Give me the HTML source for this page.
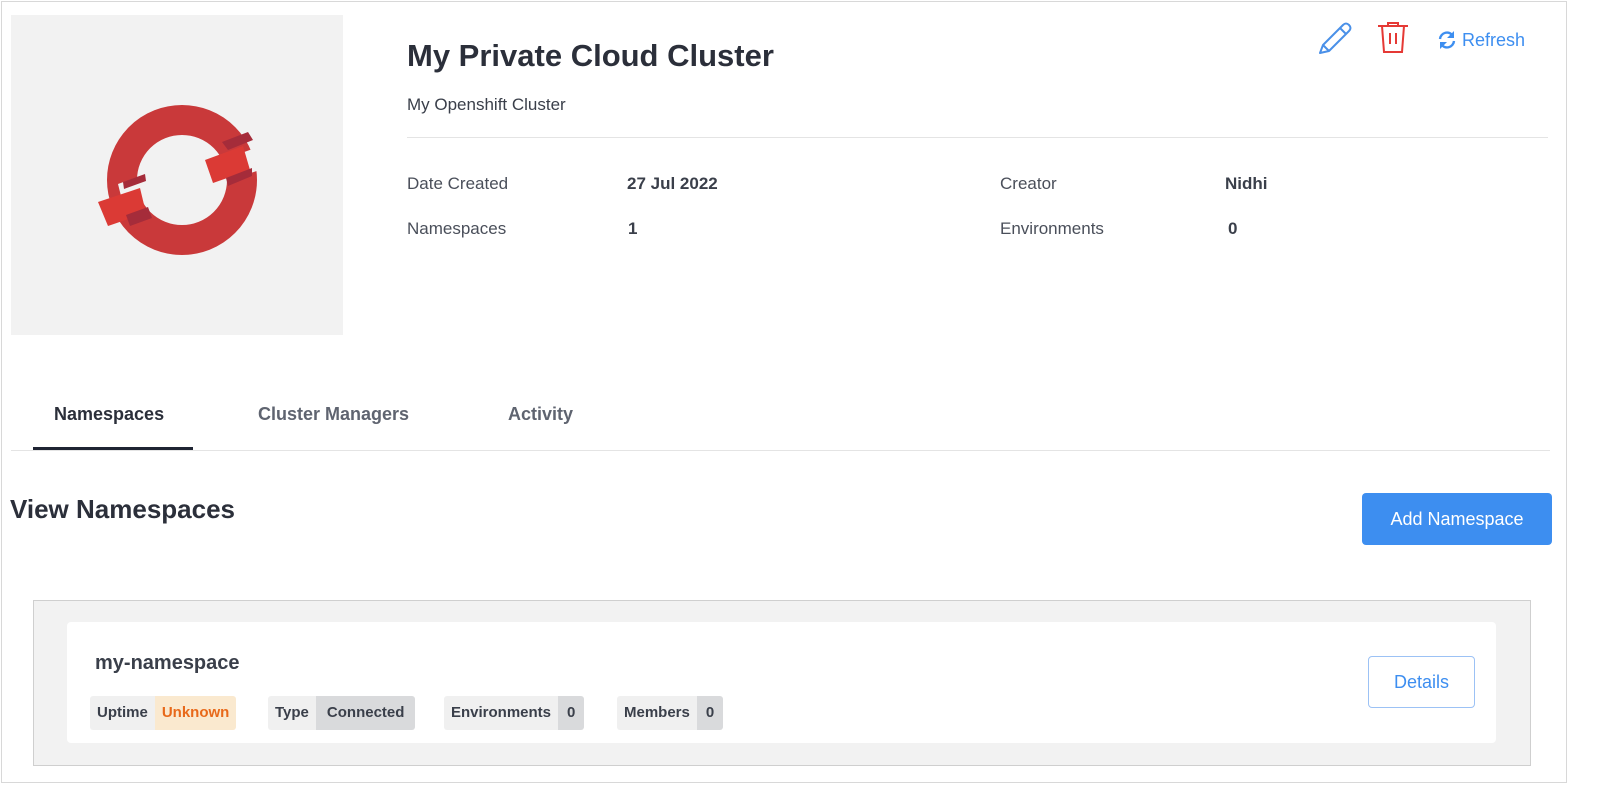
<!DOCTYPE html>
<html><head><style>
*{box-sizing:border-box;margin:0;padding:0}
body{width:1600px;height:799px;background:#fff;font-family:"Liberation Sans",sans-serif;color:#2b2f3a;position:relative;overflow:hidden}
.a{position:absolute}
.frame{left:1px;top:1px;width:1566px;height:782px;border:1px solid #d8d8d8}
.lbl{font-size:17px;color:#4a4f5a}
.val{font-size:17px;font-weight:bold;color:#3a3f4a}
.tab{font-size:18px;font-weight:bold;color:#5f6470}
.badge{top:696px;height:34px;display:flex;font-size:15px;font-weight:bold;border-radius:3px;overflow:hidden}
.badge span{padding:0 7px;line-height:34px}
.k{background:#f0f0f0;color:#3a3f4a}
</style></head><body>
<div class="a frame"></div>
<div class="a" style="left:11px;top:15px;width:332px;height:320px;background:#f2f2f2"></div>
<svg class="a" style="left:90px;top:100px" width="175" height="160" viewBox="90 100 175 160">
<circle cx="182" cy="180" r="60" fill="none" stroke="#c9393a" stroke-width="30"/>
<polygon points="118,184 160,169 163,186 122,200" fill="#f2f2f2"/>
<polygon points="222,160 258,147 260,170 228,180" fill="#f2f2f2"/>
<polygon points="98,202 140,188 146,213 108,226" fill="#db3a35"/>
<polygon points="205,160 243,146 250,170 213,183" fill="#db3a35"/>
<polygon points="126,215 148,207 152,218 130,226" fill="#a52c3a"/>
<polygon points="226,178 252,168 252,176 228,186" fill="#a52c3a"/>
<polygon points="123,182 145,174 146,181 124,189" fill="#a52c3a"/>
<polygon points="222,142 248,132 253,140 228,150" fill="#a52c3a"/>
</svg>
<div class="a" style="left:407px;top:38px;font-size:31px;font-weight:bold;color:#2b2f3a">My Private Cloud Cluster</div>
<div class="a" style="left:407px;top:95px;font-size:17px;color:#3a3f4a">My Openshift Cluster</div>
<div class="a" style="left:407px;top:137px;width:1141px;height:1px;background:#e4e4e4"></div>
<div class="a lbl" style="left:407px;top:174px">Date Created</div>
<div class="a val" style="left:627px;top:174px">27 Jul 2022</div>
<div class="a lbl" style="left:407px;top:219px">Namespaces</div>
<div class="a val" style="left:628px;top:219px">1</div>
<div class="a lbl" style="left:1000px;top:174px">Creator</div>
<div class="a val" style="left:1225px;top:174px">Nidhi</div>
<div class="a lbl" style="left:1000px;top:219px">Environments</div>
<div class="a val" style="left:1228px;top:219px">0</div>
<svg class="a" style="left:1316px;top:20px" width="38" height="36" viewBox="0 0 38 36"><path d="M4 33 L7 25 L27 5 Q30 2 33 5 Q36 8 33 11 L13 31 Z M7 25 L13 31 M24 8 L30 14" fill="none" stroke="#4a90e8" stroke-width="2" stroke-linejoin="round"/></svg>
<svg class="a" style="left:1375px;top:20px" width="36" height="36" viewBox="0 0 36 36"><path d="M3 6 H33 M13 6 V3 H23 V6 M7 6 L9 32 H27 L29 6 M15 13 V24 M21 13 V24" fill="none" stroke="#e53935" stroke-width="2"/></svg>
<svg class="a" style="left:1437px;top:30px" width="20" height="20" viewBox="0 0 20 20"><path d="M3 9 A7 7 0 0 1 16 6 M17 11 A7 7 0 0 1 4 14" fill="none" stroke="#3d8ef0" stroke-width="2.4"/><path d="M17 1 V8 H10 Z M3 19 V12 H10 Z" fill="#3d8ef0"/></svg>
<div class="a" style="left:1462px;top:30px;font-size:18px;color:#3d8ef0">Refresh</div>
<div class="a tab" style="left:54px;top:404px;color:#2b2f3a">Namespaces</div>
<div class="a tab" style="left:258px;top:404px">Cluster Managers</div>
<div class="a tab" style="left:508px;top:404px">Activity</div>
<div class="a" style="left:11px;top:450px;width:1539px;height:1px;background:#e4e4e4"></div>
<div class="a" style="left:33px;top:447px;width:160px;height:3px;background:#1f2433"></div>
<div class="a" style="left:10px;top:494px;font-size:26px;font-weight:bold">View Namespaces</div>
<div class="a" style="left:1362px;top:493px;width:190px;height:52px;background:#3d8ef0;border-radius:4px;color:#fff;font-size:18px;text-align:center;line-height:52px">Add Namespace</div>
<div class="a" style="left:33px;top:600px;width:1498px;height:166px;background:#f2f2f2;border:1px solid #cfcfcf"></div>
<div class="a" style="left:67px;top:622px;width:1429px;height:121px;background:#fff;border-radius:4px"></div>
<div class="a" style="left:95px;top:652px;font-size:20px;font-weight:bold;color:#3a3f4a">my-namespace</div>
<div class="a badge" style="left:90px"><span class="k">Uptime</span><span style="background:#fae9cf;color:#e8691a">Unknown</span></div>
<div class="a badge" style="left:268px"><span class="k">Type</span><span style="background:#d9dadc;color:#3a3f4a;padding:0 11px">Connected</span></div>
<div class="a badge" style="left:444px"><span class="k">Environments</span><span style="background:#d9dadc;color:#3a3f4a;padding:0 9px">0</span></div>
<div class="a badge" style="left:617px"><span class="k">Members</span><span style="background:#d9dadc;color:#3a3f4a;padding:0 9px">0</span></div>
<div class="a" style="left:1368px;top:656px;width:107px;height:52px;border:1px solid #9cc2f5;border-radius:4px;color:#3d8ef0;font-size:18px;text-align:center;line-height:50px">Details</div>
</body></html>
